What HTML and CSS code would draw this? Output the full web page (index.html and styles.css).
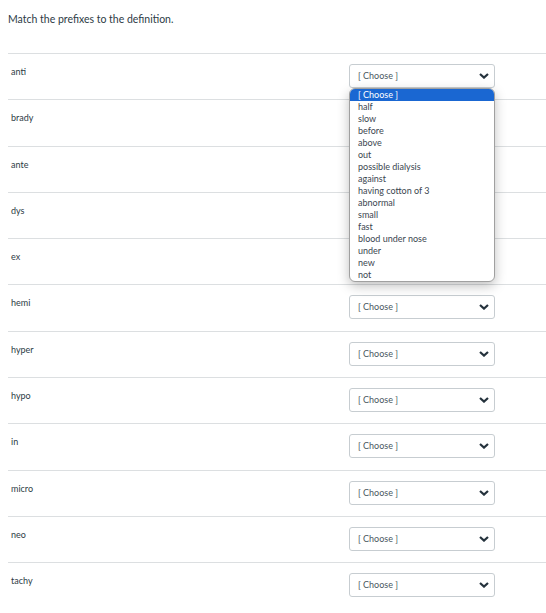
FILE: index.html
```html
<!DOCTYPE html>
<html lang="en">
<head>
    <meta charset="UTF-8">
    <meta name="viewport" content="width=device-width, initial-scale=1.0">
    <title>Quiz</title>
    <link rel="stylesheet" href="styles.css">
</head>
<body>

    <div class="question">
        <p class="title">Match the prefixes to the definition.</p>

        <div class="answers">
            <div class="row">
                <div class="prefix">anti</div>
                <div class="pick open">
                    <div class="box">[ Choose ]<svg class="arrow" viewBox="0 0 10 6"><path d="M1 1 L5 4.6 L9 1"/></svg></div>
                    <div class="list">
                        <div class="opt active">[ Choose ]</div>
                        <div class="opt">half</div>
                        <div class="opt">slow</div>
                        <div class="opt">before</div>
                        <div class="opt">above</div>
                        <div class="opt">out</div>
                        <div class="opt">possible dialysis</div>
                        <div class="opt">against</div>
                        <div class="opt">having cotton of 3</div>
                        <div class="opt">abnormal</div>
                        <div class="opt">small</div>
                        <div class="opt">fast</div>
                        <div class="opt">blood under nose</div>
                        <div class="opt">under</div>
                        <div class="opt">new</div>
                        <div class="opt">not</div>
                    </div>
                </div>
            </div>
            <div class="row">
                <div class="prefix">brady</div>
                <div class="pick"><div class="box">[ Choose ]<svg class="arrow" viewBox="0 0 10 6"><path d="M1 1 L5 4.6 L9 1"/></svg></div></div>
            </div>
            <div class="row">
                <div class="prefix">ante</div>
                <div class="pick"><div class="box">[ Choose ]<svg class="arrow" viewBox="0 0 10 6"><path d="M1 1 L5 4.6 L9 1"/></svg></div></div>
            </div>
            <div class="row">
                <div class="prefix">dys</div>
                <div class="pick"><div class="box">[ Choose ]<svg class="arrow" viewBox="0 0 10 6"><path d="M1 1 L5 4.6 L9 1"/></svg></div></div>
            </div>
            <div class="row">
                <div class="prefix">ex</div>
                <div class="pick"><div class="box">[ Choose ]<svg class="arrow" viewBox="0 0 10 6"><path d="M1 1 L5 4.6 L9 1"/></svg></div></div>
            </div>
            <div class="row">
                <div class="prefix">hemi</div>
                <div class="pick"><div class="box">[ Choose ]<svg class="arrow" viewBox="0 0 10 6"><path d="M1 1 L5 4.6 L9 1"/></svg></div></div>
            </div>
            <div class="row">
                <div class="prefix">hyper</div>
                <div class="pick"><div class="box">[ Choose ]<svg class="arrow" viewBox="0 0 10 6"><path d="M1 1 L5 4.6 L9 1"/></svg></div></div>
            </div>
            <div class="row">
                <div class="prefix">hypo</div>
                <div class="pick"><div class="box">[ Choose ]<svg class="arrow" viewBox="0 0 10 6"><path d="M1 1 L5 4.6 L9 1"/></svg></div></div>
            </div>
            <div class="row">
                <div class="prefix">in</div>
                <div class="pick"><div class="box">[ Choose ]<svg class="arrow" viewBox="0 0 10 6"><path d="M1 1 L5 4.6 L9 1"/></svg></div></div>
            </div>
            <div class="row">
                <div class="prefix">micro</div>
                <div class="pick"><div class="box">[ Choose ]<svg class="arrow" viewBox="0 0 10 6"><path d="M1 1 L5 4.6 L9 1"/></svg></div></div>
            </div>
            <div class="row">
                <div class="prefix">neo</div>
                <div class="pick"><div class="box">[ Choose ]<svg class="arrow" viewBox="0 0 10 6"><path d="M1 1 L5 4.6 L9 1"/></svg></div></div>
            </div>
            <div class="row">
                <div class="prefix">tachy</div>
                <div class="pick"><div class="box">[ Choose ]<svg class="arrow" viewBox="0 0 10 6"><path d="M1 1 L5 4.6 L9 1"/></svg></div></div>
            </div>
        </div>
    </div>

</body>
</html>
```

FILE: styles.css
```css
*{margin: 0;
    padding: 0;
    box-sizing: border-box;
}
body{
    font-family: Lato, "Noto Sans", sans-serif;
    color: #2d3b45;
    background-color: #fff;
    padding-left: 8px;
    overflow: hidden;
}
.title{
    font-size: 10.5px;
    line-height: 14px;
    padding-top: 12px;
    height: 53px;
}
.row{
    border-top: 1px solid #dcdfe1;
    height: 46.3px;
    display: grid;
    grid-template-columns: 341px 146px;
    align-items: start;
}
.prefix{
    font-size: 9px;
    padding-left: 3px;
    padding-top: 12px;
    line-height: 12px;
}
.pick{
    position: relative;
    padding-top: 10px;
}
.box{
    height: 24px;
    border: 1px solid #c7cdd1;
    border-radius: 3px;
    font-size: 9px;
    line-height: 22px;
    padding-left: 8px;
    color: #4a5761;
    display: flex;
    justify-content: space-between;
    align-items: center;
    background-color: #fff;
}
.arrow{
    width: 10px;
    height: 6px;
    margin-right: 5px;
    fill: none;
    stroke: #24323c;
    stroke-width: 2.2;
}
.list{
    position: absolute;
    top: 34px;
    left: 0;
    width: 146px;
    background-color: #fff;
    border: 1px solid #a0a0a0;
    border-radius: 6px;
    box-shadow: 0 4px 12px rgba(0, 0, 0, 0.25);
    overflow: hidden;
    z-index: 2;
}
.opt{
    font-size: 9px;
    line-height: 12px;
    height: 12px;
    padding-left: 8px;
    color: #3b4650;
}
.opt.active{
    background-color: #1a67d2;
    color: #fff;
}
```
